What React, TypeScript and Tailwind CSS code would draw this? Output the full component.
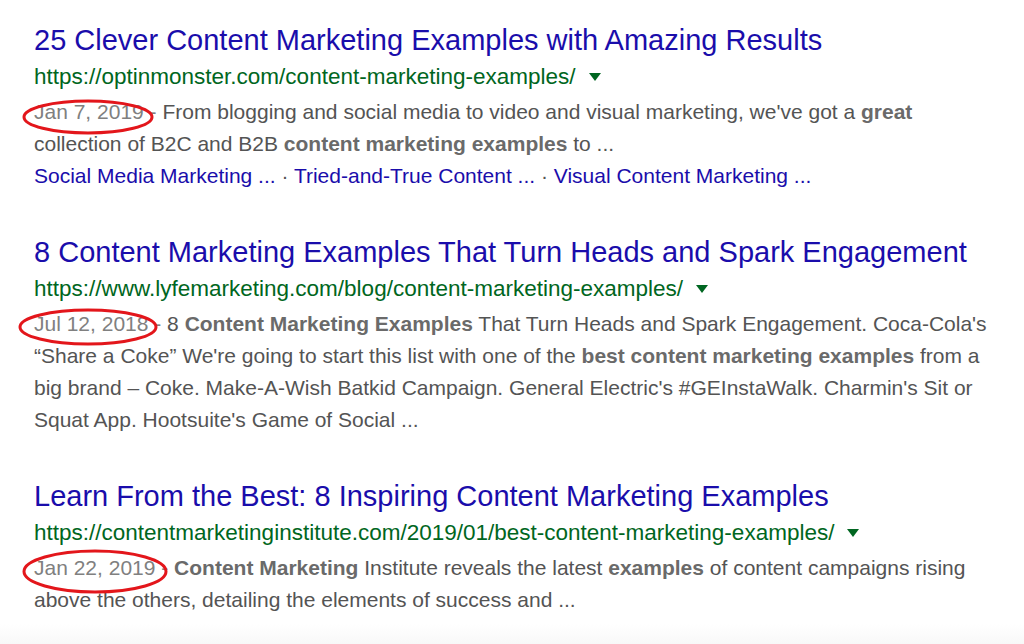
import React from 'react';

interface Result {
  title: string;
  url: string;
  date: string;
  ring: { left: number; top: number; width: number; height: number };
  snippet: React.ReactNode;
  sitelinks?: string[];
}

const B: React.FC<{ children: React.ReactNode }> = ({ children }) => (
  <b className="font-bold text-[#6a6a6a]">{children}</b>
);

const results: Result[] = [
  {
    title: '25 Clever Content Marketing Examples with Amazing Results',
    url: 'https://optinmonster.com/content-marketing-examples/',
    date: 'Jan 7, 2019',
    ring: { left: -12, top: -1, width: 132, height: 36 },
    snippet: (
      <>
        From blogging and social media to video and visual marketing, we've got a <B>great</B>
        <br />
        collection of B2C and B2B <B>content marketing examples</B> to ...
      </>
    ),
    sitelinks: ['Social Media Marketing ...', 'Tried-and-True Content ...', 'Visual Content Marketing ...'],
  },
  {
    title: '8 Content Marketing Examples That Turn Heads and Spark Engagement',
    url: 'https://www.lyfemarketing.com/blog/content-marketing-examples/',
    date: 'Jul 12, 2018',
    ring: { left: -16, top: -4, width: 140, height: 38 },
    snippet: (
      <>
        8 <B>Content Marketing Examples</B> That Turn Heads and Spark Engagement. Coca-Cola's
        <br />
        “Share a Coke” We're going to start this list with one of the <B>best content marketing examples</B> from a
        <br />
        big brand – Coke. Make-A-Wish Batkid Campaign. General Electric's #GEInstaWalk. Charmin's Sit or
        <br />
        Squat App. Hootsuite's Game of Social ...
      </>
    ),
  },
  {
    title: 'Learn From the Best: 8 Inspiring Content Marketing Examples',
    url: 'https://contentmarketinginstitute.com/2019/01/best-content-marketing-examples/',
    date: 'Jan 22, 2019',
    ring: { left: -12, top: -7, width: 146, height: 45 },
    snippet: (
      <>
        <B>Content Marketing</B> Institute reveals the latest <B>examples</B> of content campaigns rising
        <br />
        above the others, detailing the elements of success and ...
      </>
    ),
  },
];

const Ring: React.FC<{ ring: Result['ring'] }> = ({ ring }) => (
  <svg
    className="absolute pointer-events-none"
    style={{ left: ring.left, top: ring.top, width: ring.width, height: ring.height }}
    viewBox={`0 0 ${ring.width} ${ring.height}`}
  >
    <ellipse
      cx={ring.width / 2}
      cy={ring.height / 2}
      rx={ring.width / 2 - 2}
      ry={ring.height / 2 - 2}
      fill="none"
      stroke="#e3161b"
      strokeWidth={3}
    />
  </svg>
);

const App: React.FC = () => {
  return (
    <div className="w-[1024px] h-[644px] overflow-hidden bg-white flex flex-col font-['Liberation_Sans',Arial,sans-serif]">
      <div className="flex flex-col gap-[42px] pl-[34px] pt-[22px]">
        {results.map((r) => (
          <div key={r.url}>
            <div className="text-[29px] leading-[36px] text-[#1a0dab] whitespace-nowrap">{r.title}</div>
            <div className="flex items-center text-[22.5px] leading-[38px] text-[#006621] whitespace-nowrap">
              <span>{r.url}</span>
              <svg className="ml-[13px] w-[12px] h-[8px]" viewBox="0 0 12 8">
                <path d="M0 0h12L6 8z" fill="#006621" />
              </svg>
            </div>
            <div className="text-[21px] leading-[32px] text-[#545454] whitespace-nowrap">
              <span className="relative text-[#808080]">
                {r.date}
                <Ring ring={r.ring} />
              </span>
              <span className="text-[#808080]"> - </span>
              {r.snippet}
            </div>
            {r.sitelinks && (
              <div className="text-[21px] leading-[32px] text-[#1a0dab] whitespace-nowrap">
                {r.sitelinks.map((s, i) => (
                  <React.Fragment key={s}>
                    {i > 0 && <span className="text-[#545454]"> · </span>}
                    <span>{s}</span>
                  </React.Fragment>
                ))}
              </div>
            )}
          </div>
        ))}
      </div>
      <div className="mt-auto h-[20px] bg-gradient-to-b from-white to-[#f8f8f8]" />
    </div>
  );
};

export default App;
